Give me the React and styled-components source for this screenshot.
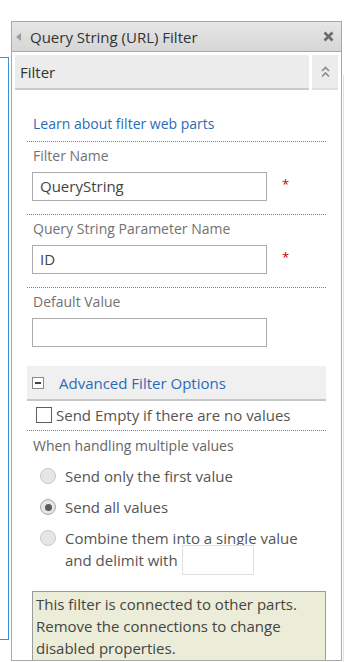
import React from 'react';
import styled, { createGlobalStyle } from 'styled-components';

const GlobalStyle = createGlobalStyle`
  html, body {
    margin: 0;
    padding: 0;
    background: #ffffff;
  }
  body {
    font-family: 'Open Sans', 'Noto Sans', sans-serif;
    font-size: 14px;
    color: #444444;
  }
`;

const App = () => {
  return (
    <>
      <GlobalStyle />
      <Page>
        <SelectedFrame />
        <ToolPane>
          <PaneHeader>
            <BackArrow />
            <PaneTitle>Query String (URL) Filter</PaneTitle>
            <CloseButton>
              <svg width="11" height="11" viewBox="0 0 11 11">
                <path d="M1.5 1.5 L9.5 9.5 M9.5 1.5 L1.5 9.5" stroke="#6b6b6b" strokeWidth="2.6" />
              </svg>
            </CloseButton>
          </PaneHeader>
          <PaneBody>
            <SectionRow>
              <SectionBar>Filter</SectionBar>
              <CollapseBox>
                <svg width="9" height="12" viewBox="0 0 9 12">
                  <path d="M1 5 L4.5 1.5 L8 5 M1 10.5 L4.5 7 L8 10.5" fill="none" stroke="#8a8a8a" strokeWidth="1.6" />
                </svg>
              </CollapseBox>
            </SectionRow>
            <Content>
              <HelpLink>Learn about filter web parts</HelpLink>
              <Divider />
              <FieldLabel>Filter Name</FieldLabel>
              <InputRow>
                <TextBox>QueryString</TextBox>
                <Required>*</Required>
              </InputRow>
              <Divider $top={13} />
              <FieldLabel>Query String Parameter Name</FieldLabel>
              <InputRow>
                <TextBox>ID</TextBox>
                <Required>*</Required>
              </InputRow>
              <Divider $top={13} />
              <FieldLabel>Default Value</FieldLabel>
              <InputRow>
                <TextBox />
              </InputRow>
              <AdvancedBar>
                <MinusBox />
                <AdvancedTitle>Advanced Filter Options</AdvancedTitle>
              </AdvancedBar>
              <CheckRow>
                <CheckBox />
                <CheckText>Send Empty if there are no values</CheckText>
              </CheckRow>
              <Divider $top={1} />
              <GroupLabel>When handling multiple values</GroupLabel>
              <RadioList>
                <RadioRow>
                  <Radio />
                  <RadioText>Send only the first value</RadioText>
                </RadioRow>
                <RadioRow>
                  <Radio $checked />
                  <RadioText>Send all values</RadioText>
                </RadioRow>
                <RadioRow>
                  <Radio />
                  <RadioText>
                    Combine them into a single value
                    <DelimitLine>
                      and delimit with <DelimitBox />
                    </DelimitLine>
                  </RadioText>
                </RadioRow>
              </RadioList>
              <InfoBox>
                This filter is connected to other parts. Remove the connections to change
                disabled properties.
              </InfoBox>
            </Content>
          </PaneBody>
        </ToolPane>
        <ScrollEdge />
      </Page>
    </>
  );
};

export default App;

const Page = styled.div`
  display: flex;
  align-items: flex-start;
  width: 344px;
  height: 662px;
  overflow: hidden;
`;

// web part behind the tool pane
const SelectedFrame = styled.div`
  width: 8px;
  height: 581px;
  margin-top: 57px;
  margin-right: 2px;
  border: 1px solid #3d8fd9;
  border-left: none;
  flex-shrink: 0;
`;

const ToolPane = styled.div`
  width: 331px;
  height: 640px;
  margin-top: 21px;
  box-sizing: border-box;
  border: 1px solid #a9a9a9;
  display: flex;
  flex-direction: column;
  flex-shrink: 0;
  overflow: hidden;
`;

const ScrollEdge = styled.div`
  width: 2px;
  height: 587px;
  margin-top: 75px;
  margin-left: 1px;
  background: #e3e3e3;
  flex-shrink: 0;
`;

const PaneHeader = styled.div`
  display: flex;
  align-items: center;
  height: 29px;
  padding: 0 7px 0 4px;
  background: linear-gradient(#e6e6e6, #d6d6d6);
  border-bottom: 1px solid #a9a9a9;
  flex-shrink: 0;
`;

const BackArrow = styled.span`
  width: 0;
  height: 0;
  border-top: 4.5px solid transparent;
  border-bottom: 4.5px solid transparent;
  border-right: 5px solid #9c9c9c;
  margin-right: 9px;
`;

const PaneTitle = styled.div`
  flex: 1;
  font-size: 15px;
  color: #333333;
  line-height: 20px;
`;

const CloseButton = styled.div`
  display: flex;
  align-items: center;
`;

const PaneBody = styled.div`
  flex: 1;
  padding: 3px 3px 0 3px;
  display: flex;
  flex-direction: column;
  overflow: hidden;
`;

const SectionRow = styled.div`
  display: flex;
  gap: 3px;
  height: 35px;
  flex-shrink: 0;
`;

const SectionBar = styled.div`
  flex: 1;
  display: flex;
  align-items: center;
  padding-left: 5px;
  background: #ececec;
  border-bottom: 2px solid #cbcbcb;
  font-size: 15px;
  color: #333333;
`;

const CollapseBox = styled.div`
  width: 26px;
  display: flex;
  align-items: center;
  justify-content: center;
  background: #ececec;
  border-bottom: 2px solid #dedede;
`;

const Content = styled.div`
  padding: 0 12px;
  display: flex;
  flex-direction: column;
`;

const HelpLink = styled.a`
  margin-top: 24px;
  padding-left: 6px;
  line-height: 20px;
  font-size: 14px;
  color: #2a6bb8;
  cursor: pointer;
`;

const Divider = styled.div`
  margin-top: ${(p) => p.$top ?? 7}px;
  border-top: 1px dotted #4f86d6;
`;

const FieldLabel = styled.div`
  margin-top: 4px;
  padding-left: 6px;
  line-height: 20px;
  color: #727272;
`;

const InputRow = styled.div`
  display: flex;
  align-items: flex-start;
  margin-top: 6px;
  padding-left: 5px;
`;

const TextBox = styled.div`
  width: 235px;
  height: 29px;
  box-sizing: border-box;
  border: 1px solid #ababab;
  padding: 0 7px;
  line-height: 27px;
  font-size: 15px;
  color: #444444;
`;

const Required = styled.span`
  margin-left: 15px;
  margin-top: 3px;
  font-size: 13px;
  color: #c00000;
`;

const AdvancedBar = styled.div`
  display: flex;
  align-items: center;
  height: 33px;
  margin-top: 19px;
  background: #f0f0f0;
  border-bottom: 2px solid #c6c6c6;
`;

const MinusBox = styled.span`
  position: relative;
  width: 12px;
  height: 12px;
  box-sizing: border-box;
  margin-left: 5px;
  border: 1px solid #8a8a8a;
  background: #ffffff;
  &::after {
    content: '';
    position: absolute;
    left: 2px;
    top: 4px;
    width: 6px;
    height: 2px;
    background: #444444;
  }
`;

const AdvancedTitle = styled.span`
  margin-left: 15px;
  font-size: 15px;
  color: #2a6bb8;
`;

const CheckRow = styled.div`
  display: flex;
  align-items: center;
  height: 28px;
  padding-left: 9px;
`;

const CheckBox = styled.span`
  width: 16px;
  height: 16px;
  box-sizing: border-box;
  border: 1px solid #5f5f5f;
  background: #ffffff;
  margin-right: 4px;
`;

const CheckText = styled.span`
  font-size: 15px;
  color: #555555;
`;

const GroupLabel = styled.div`
  margin-top: 5px;
  padding-left: 6px;
  line-height: 20px;
  color: #666666;
`;

const RadioList = styled.div`
  display: flex;
  flex-direction: column;
  margin-top: 10px;
  gap: 11px;
`;

const RadioRow = styled.div`
  display: flex;
  align-items: flex-start;
  padding-left: 13px;
`;

const Radio = styled.span`
  position: relative;
  width: 16px;
  height: 16px;
  box-sizing: border-box;
  margin-top: 2px;
  margin-right: 9px;
  border-radius: 50%;
  border: 1px solid ${(p) => (p.$checked ? '#a8a8a8' : '#c8c8c8')};
  background: #e6e6e6;
  flex-shrink: 0;
  &::after {
    content: '';
    display: ${(p) => (p.$checked ? 'block' : 'none')};
    position: absolute;
    left: 3.5px;
    top: 3.5px;
    width: 7px;
    height: 7px;
    border-radius: 50%;
    background: #5a5a5a;
  }
`;

const RadioText = styled.div`
  font-size: 15px;
  line-height: 20px;
  color: #555555;
`;

const DelimitLine = styled.div`
  display: flex;
  align-items: center;
  gap: 4px;
  margin-top: -3px;
`;

const DelimitBox = styled.span`
  width: 72px;
  height: 30px;
  box-sizing: border-box;
  border: 1px solid #e0e0e0;
  background: #ffffff;
`;

const InfoBox = styled.div`
  margin: 16px 0 0 5px;
  padding: 1px 3px 4px 3px;
  width: 294px;
  box-sizing: border-box;
  background: #ebedd9;
  border: 1px solid #9c9c9c;
  font-size: 15px;
  line-height: 22px;
  color: #444444;
`;
